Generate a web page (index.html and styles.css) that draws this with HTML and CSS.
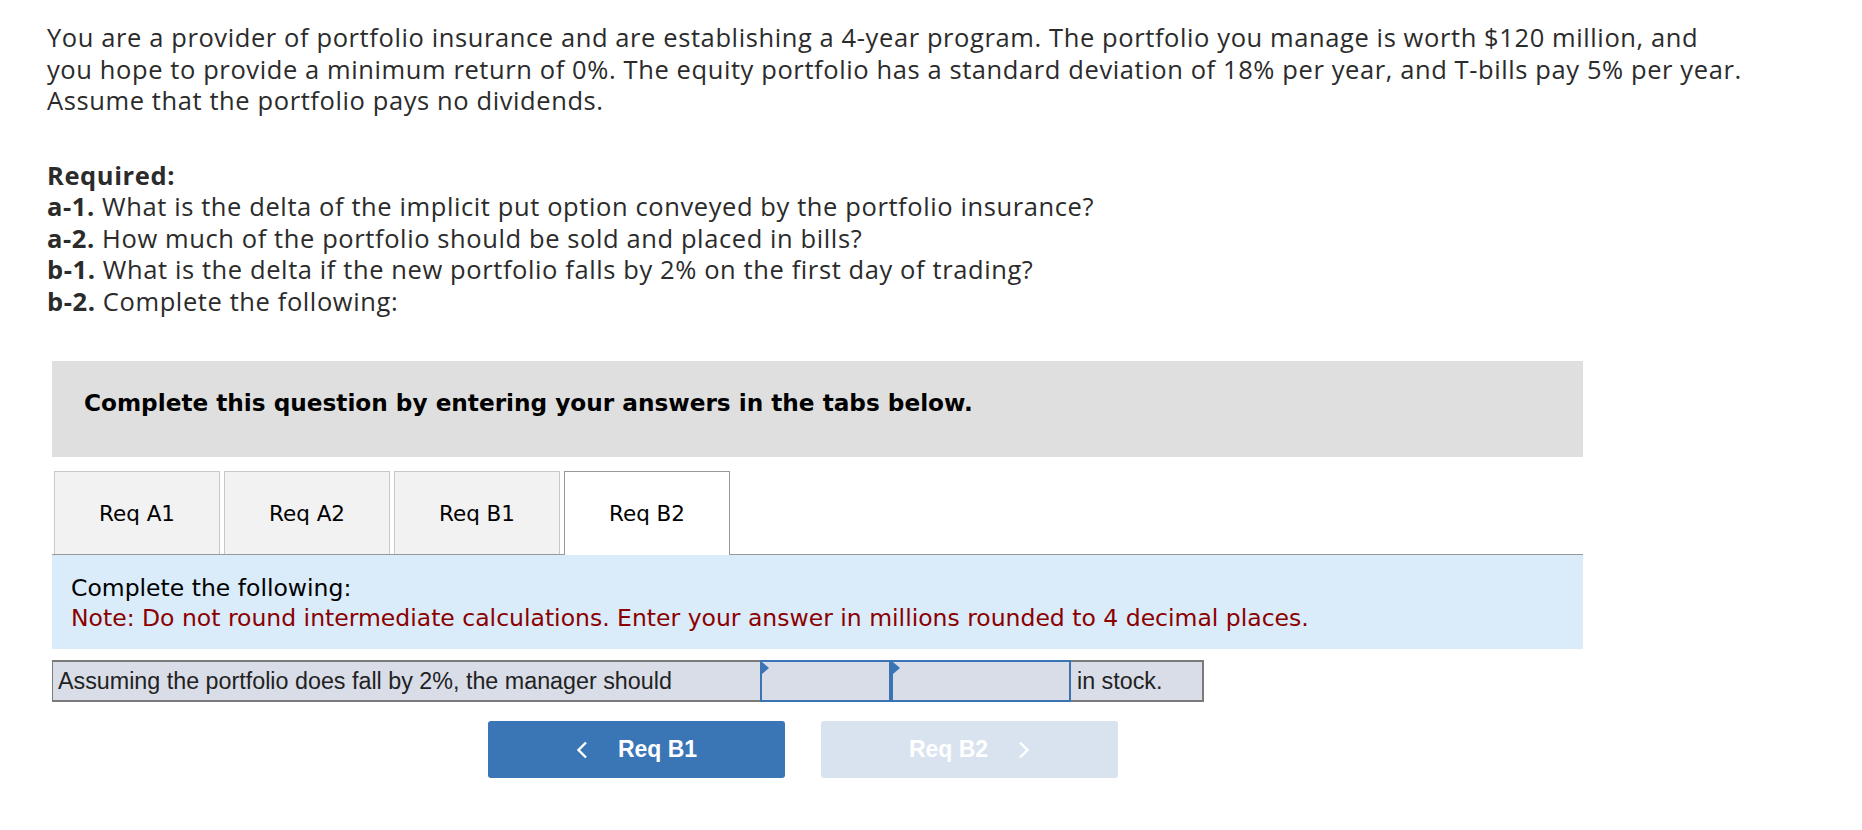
FILE: index.html
```html
<!DOCTYPE html>
<html>
<head>
<meta charset="utf-8">
<link rel="stylesheet" href="styles.css">
</head>
<body>
<div class="page">
  <p class="intro">You are a provider of portfolio insurance and are establishing a 4-year program. The portfolio you manage is worth $120 million, and<br>you hope to provide a minimum return of 0%. The equity portfolio has a standard deviation of 18% per year, and T-bills pay 5% per year.<br>Assume that the portfolio pays no dividends.</p>
  <div class="required">
    <div class="req-title">Required:</div>
    <div><b>a-1.</b> What is the delta of the implicit put option conveyed by the portfolio insurance?</div>
    <div><b>a-2.</b> How much of the portfolio should be sold and placed in bills?</div>
    <div><b>b-1.</b> What is the delta if the new portfolio falls by 2% on the first day of trading?</div>
    <div><b>b-2.</b> Complete the following:</div>
  </div>

  <div class="card">
    <div class="banner">Complete this question by entering your answers in the tabs below.</div>
    <div class="tabs">
      <div class="tab">Req A1</div>
      <div class="tab">Req A2</div>
      <div class="tab">Req B1</div>
      <div class="tab active">Req B2</div>
    </div>
    <div class="info">
      <div>Complete the following:</div>
      <div class="note">Note: Do not round intermediate calculations. Enter your answer in millions rounded to 4 decimal places.</div>
    </div>
    <div class="answer">
      <div class="cell label">Assuming the portfolio does fall by 2%, the manager should</div>
      <div class="cell input in1"><span class="flag"></span></div>
      <div class="cell input in2"><span class="flag"></span></div>
      <div class="cell stock">in stock.</div>
    </div>
    <div class="nav">
      <div class="btn prev"><svg class="chev" width="12" height="18" viewBox="0 0 12 18"><polyline points="10,1.5 2.5,9 10,16.5" fill="none" stroke="#fff" stroke-width="2.4"/></svg>Req B1</div>
      <div class="btn next disabled">Req B2<svg class="chev" width="12" height="18" viewBox="0 0 12 18"><polyline points="2,1.5 9.5,9 2,16.5" fill="none" stroke="#fff" stroke-width="2.4"/></svg></div>
    </div>
  </div>
</div>
</body>
</html>
```
FILE: styles.css
```css
html, body {
  margin: 0;
  padding: 0;
  background: #ffffff;
}
.page {
  padding: 22px 0 0 47px;
  font-family: "Open Sans", "Liberation Sans", sans-serif;
  color: #2b2b2b;
}
.intro {
  margin: 0;
  white-space: nowrap;
  font-size: 25.5px;
  letter-spacing: 0.6px;
  line-height: 31.5px;
}
.required {
  margin-top: 43px;
  font-size: 25.5px;
  letter-spacing: 0.6px;
  line-height: 31.5px;
  white-space: nowrap;
}
.req-title {
  font-weight: bold;
}
.required b {
  font-weight: bold;
}
.card {
  margin: 44px 0 0 5px;
  width: 1531px;
}
.banner {
  background: #dfdfdf;
  height: 96px;
  box-sizing: border-box;
  padding: 28px 0 0 32px;
  font-family: "DejaVu Sans", Verdana, sans-serif;
  font-weight: bold;
  font-size: 23.2px;
  color: #000;
}
.tabs {
  display: flex;
  gap: 4px;
  margin-top: 14px;
  padding-left: 2px;
  border-bottom: 1px solid #999;
  height: 83px;
}
.tab {
  width: 166px;
  box-sizing: border-box;
  border: 1px solid #c8c8c8;
  border-bottom: none;
  background: #f2f2f2;
  display: flex;
  align-items: center;
  justify-content: center;
  font-family: "DejaVu Sans", Verdana, sans-serif;
  font-size: 21.5px;
  color: #000;
}
.tab.active {
  background: #fff;
  border-color: #999;
  height: 84px;
}
.info {
  background: #daebf9;
  height: 94px;
  box-sizing: border-box;
  padding: 18px 0 0 19px;
  font-family: "DejaVu Sans", Verdana, sans-serif;
  font-size: 23.5px;
  line-height: 30px;
  color: #000;
}
.note {
  color: #8b0000;
}
.answer {
  display: flex;
  margin-top: 11px;
  height: 42px;
  font-family: "Liberation Sans", Arial, sans-serif;
  font-size: 23.3px;
  color: #222;
}
.cell {
  box-sizing: border-box;
  background: #d9dde8;
  border-top: 2px solid #7a7a7a;
  border-bottom: 2px solid #7a7a7a;
  display: flex;
  align-items: center;
}
.label {
  width: 708px;
  border-left: 1px solid #7a7a7a;
  padding-left: 5px;
}
.input {
  position: relative;
  border: 2px solid #3a74b4;
}
.in1 {
  width: 131px;
}
.in2 {
  width: 180px;
}
.flag {
  position: absolute;
  left: 0;
  top: 0;
  width: 0;
  height: 0;
  border-top: 6px solid transparent;
  border-bottom: 6px solid transparent;
  border-left: 7px solid #3a74b4;
}
.stock {
  width: 133px;
  border-right: 2px solid #7a7a7a;
  padding-left: 6px;
}
.nav {
  display: flex;
  gap: 36px;
  margin: 19px 0 0 436px;
}
.btn {
  width: 297px;
  height: 57px;
  border-radius: 3px;
  background: #3a75b6;
  color: #fff;
  display: flex;
  align-items: center;
  justify-content: center;
  font-family: "Liberation Sans", Arial, sans-serif;
  font-weight: bold;
  font-size: 23px;
}
.btn.disabled {
  background: #d9e3f0;
}
.prev .chev {
  margin-right: 30px;
}
.next .chev {
  margin-left: 30px;
}
```
